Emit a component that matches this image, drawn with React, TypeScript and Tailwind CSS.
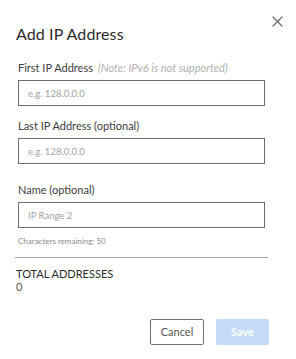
import React from "react";

function CloseIcon() {
  return (
    <svg width="11" height="11" viewBox="0 0 11 11" fill="none">
      <path d="M1 1L10 10M10 1L1 10" stroke="#6b6b6b" strokeWidth="1.2" strokeLinecap="round" />
    </svg>
  );
}

function Field({
  label,
  note,
  placeholder,
  className,
}: {
  label: string;
  note?: string;
  placeholder: string;
  className?: string;
}) {
  return (
    <div className={className}>
      <div className="text-[11px] leading-[14px] text-[#3d3d3d] whitespace-nowrap">
        {label}
        {note && <span className="ml-[5px] italic text-[#b0b0b0]">{note}</span>}
      </div>
      <input
        className="mt-[5px] block w-[247px] h-[26px] border border-[#6b6b6b] bg-white pl-[9px] text-[9.5px] text-[#333] placeholder:text-[#a2a2a2] outline-none"
        placeholder={placeholder}
      />
    </div>
  );
}

export default function App() {
  return (
    <div className="relative w-[296px] h-[359px] bg-white font-['Lato',sans-serif] overflow-hidden">
      <button className="absolute left-[272px] top-[16px]" aria-label="Close">
        <CloseIcon />
      </button>

      <div className="pt-[24px] pl-[16px]">
        <h2 className="text-[16px] leading-[20px] text-[#2b2b2b] tracking-[0.1px]">Add IP Address</h2>
      </div>

      <div className="pl-[18px]">
        <Field
          className="mt-[17px]"
          label="First IP Address"
          note="(Note: IPv6 is not supported)"
          placeholder="e.g. 128.0.0.0"
        />
        <Field className="mt-[13px]" label="Last IP Address (optional)" placeholder="e.g. 128.0.0.0" />
        <Field className="mt-[19px]" label="Name (optional)" placeholder="IP Range 2" />
        <div className="mt-[8px] text-[8px] leading-[10px] text-[#8a8a8a]">Characters remaining: 50</div>
      </div>

      <div className="mt-[11px] ml-[15px] w-[253px] h-px bg-[#a3a3a3]" />

      <div className="pl-[16px] mt-[9px] text-[11px] leading-[13px] text-[#2b2b2b]">
        <div>TOTAL ADDRESSES</div>
        <div className="text-[#555]">0</div>
      </div>

      <div className="mt-[26px] flex justify-end gap-[12px] pr-[27px]">
        <button className="w-[54px] h-[26px] rounded-[2px] border border-[#707070] text-[11px] text-[#555] bg-white">
          Cancel
        </button>
        <button className="w-[53px] h-[26px] rounded-[2px] bg-[#c3dbf7] text-[11px] font-bold text-white">
          Save
        </button>
      </div>
    </div>
  );
}
